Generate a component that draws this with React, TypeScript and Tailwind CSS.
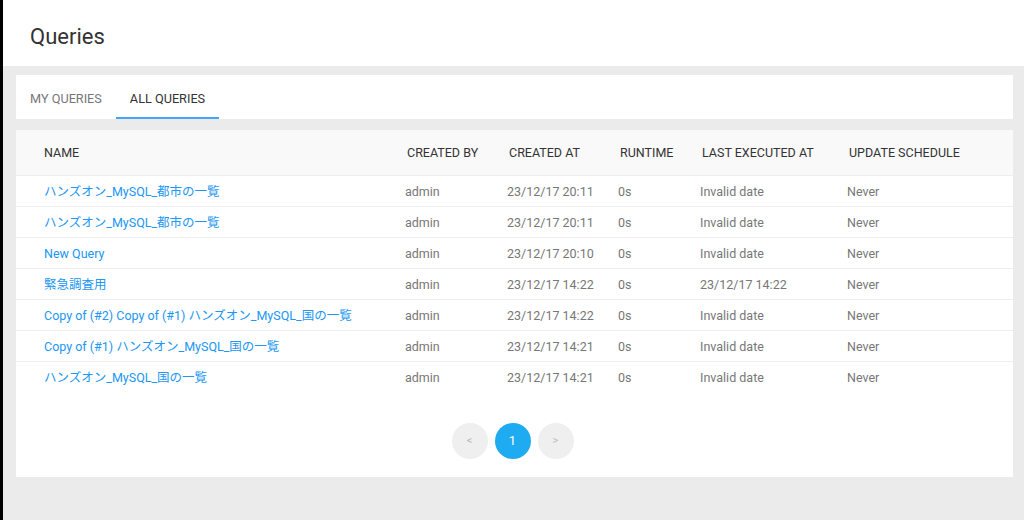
const rows = [
  { name: 'ハンズオン_MySQL_都市の一覧', at: '23/12/17 20:11', last: 'Invalid date' },
  { name: 'ハンズオン_MySQL_都市の一覧', at: '23/12/17 20:11', last: 'Invalid date' },
  { name: 'New Query', at: '23/12/17 20:10', last: 'Invalid date' },
  { name: '緊急調査用', at: '23/12/17 14:22', last: '23/12/17 14:22' },
  { name: 'Copy of (#2) Copy of (#1) ハンズオン_MySQL_国の一覧', at: '23/12/17 14:22', last: 'Invalid date' },
  { name: 'Copy of (#1) ハンズオン_MySQL_国の一覧', at: '23/12/17 14:21', last: 'Invalid date' },
  { name: 'ハンズオン_MySQL_国の一覧', at: '23/12/17 14:21', last: 'Invalid date' },
]

const cols = 'grid grid-cols-[361px_102px_111px_82px_147px_1fr] pl-[28px]'

export default function App() {
  return (
    <div className="flex h-[520px] w-[1024px] border-l-[3px] border-black bg-[#ebebeb] font-['Roboto','Noto_Sans_CJK_JP',sans-serif]">
      <div className="flex flex-1 flex-col">
        <header className="flex h-[66px] items-center bg-white pl-[27px]">
          <h1 className="pt-[6px] text-[22px] text-[#333]">Queries</h1>
        </header>

        <div className="flex flex-col gap-[11px] pt-[9px] pl-[13px] pr-[11px]">
          <nav className="flex h-[44px] items-stretch bg-white pl-[14px] text-[12.7px]">
            <button className="pr-[14px] pt-[3px] text-[#777]">MY QUERIES</button>
            <button className="border-b-2 border-[#42a5f5] px-[14px] pt-[5px] text-[#333]">
              ALL QUERIES
            </button>
          </nav>

          <section className="flex h-[347px] flex-col bg-white">
            <div className={`${cols} h-[46px] items-center border-b border-[#eee] bg-[#f9f9f9] pt-[2px] text-[12.5px] text-[#333]`}>
              <div>NAME</div>
              <div className="pl-[2px]">CREATED BY</div>
              <div className="pl-[2px]">CREATED AT</div>
              <div className="pl-[2px]">RUNTIME</div>
              <div className="pl-[2px]">LAST EXECUTED AT</div>
              <div className="pl-[2px]">UPDATE SCHEDULE</div>
            </div>
            {rows.map((r, i) => (
              <div
                key={i}
                className={`${cols} h-[31px] items-center pt-[2px] text-[12.5px] text-[#777] ${i < rows.length - 1 ? 'border-b border-[#eee]' : ''}`}
              >
                <a className="text-[#2196f3]">{r.name}</a>
                <div>admin</div>
                <div>{r.at}</div>
                <div>0s</div>
                <div>{r.last}</div>
                <div>Never</div>
              </div>
            ))}
            <div className="mt-[30px] flex justify-center gap-[7px] pr-[4px]">
              <span className="flex h-[36px] w-[36px] items-center justify-center rounded-full bg-[#efefef] text-[11px] text-[#bbb]">&lt;</span>
              <span className="flex h-[36px] w-[36px] items-center justify-center rounded-full bg-[#1eabf1] text-[13px] text-white">1</span>
              <span className="flex h-[36px] w-[36px] items-center justify-center rounded-full bg-[#efefef] text-[11px] text-[#bbb]">&gt;</span>
            </div>
          </section>
        </div>
      </div>
    </div>
  )
}
